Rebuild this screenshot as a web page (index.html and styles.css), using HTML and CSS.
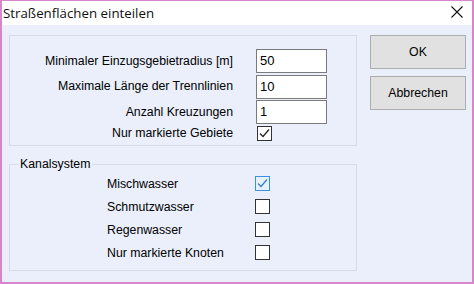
FILE: index.html
```html
<!DOCTYPE html>
<html>
<head>
	<meta charset="utf-8">
	<title>Straßenflächen einteilen</title>
	<link rel="stylesheet" href="styles.css">
</head>
<body>
	<div class="window">
		<header class="titlebar">
			<span class="title">Straßenflächen einteilen</span>
			<svg class="close" width="12" height="12" viewBox="0 0 12 12">
				<path d="M0.5 0.5 L11.5 11.5 M11.5 0.5 L0.5 11.5" stroke="#111" stroke-width="1.1" fill="none"/>
			</svg>
		</header>
		<main class="client">
			<div class="groups">
				<section class="group params">
					<label class="lbl">Minimaler Einzugsgebietradius [m]</label>
					<div class="field">50</div>
					<label class="lbl">Maximale Länge der Trennlinien</label>
					<div class="field">10</div>
					<label class="lbl">Anzahl Kreuzungen</label>
					<div class="field">1</div>
					<label class="lbl">Nur markierte Gebiete</label>
					<span class="check on"><svg width="13" height="13" viewBox="0 0 13 13"><path d="M2 6.5 L5 9.5 L11 2.5" stroke="#222" stroke-width="1.2" fill="none"/></svg></span>
				</section>
				<fieldset class="group kanal">
					<legend>Kanalsystem</legend>
					<div class="rows">
						<label class="lbl">Mischwasser</label>
						<span class="check on blue"><svg width="13" height="13" viewBox="0 0 13 13"><path d="M2 6.5 L5 9.5 L11 2.5" stroke="#2f7fd0" stroke-width="1.2" fill="none"/></svg></span>
						<label class="lbl">Schmutzwasser</label>
						<span class="check"></span>
						<label class="lbl">Regenwasser</label>
						<span class="check"></span>
						<label class="lbl">Nur markierte Knoten</label>
						<span class="check"></span>
					</div>
				</fieldset>
			</div>
			<div class="buttons">
				<button class="btn">OK</button>
				<button class="btn">Abbrechen</button>
			</div>
		</main>
	</div>
</body>
</html>
```

FILE: styles.css
```css
html, body {
	margin: 0;
	height: 100%;
}

body {
	font: 12.3px/1 "Liberation Sans", Arial, sans-serif;
	color: #000;
}

.window {
	box-sizing: border-box;
	width: 474px;
	height: 284px;
	border: 2px solid #d985cb;
	border-top-width: 1px;
	background: #eaeffb;
	display: flex;
	flex-direction: column;
}

.titlebar {
	height: 24px;
	background: #fff;
	display: flex;
	align-items: center;
	justify-content: space-between;
	padding: 0 9px 0 1px;
}

.title {
	font: 13.3px "Open Sans", "Noto Sans", sans-serif;
	color: #111;
	margin-top: -1px;
}

.close {
	margin-top: -2px;
}

.client {
	flex: 1;
	display: flex;
	padding: 10px 6px 0 7px;
}

.groups {
	width: 348px;
	display: flex;
	flex-direction: column;
	gap: 12px;
}

.group {
	box-sizing: border-box;
	border: 1px solid #d6dbe6;
	margin: 0;
}

.params {
	height: 111px;
	display: grid;
	grid-template-columns: 223px 71px;
	column-gap: 23px;
	grid-template-rows: 24px 24px 24px 16px;
	row-gap: 1.5px;
	align-items: center;
	padding-top: 13px;
	align-content: start;
}

.lbl {
	text-align: right;
	white-space: nowrap;
}

.field {
	box-sizing: border-box;
	height: 24px;
	background: #fff;
	border: 1px solid #7a7a7a;
	padding: 4px 3px 0;
	font-size: 13px;
}

.check {
	box-sizing: border-box;
	width: 15px;
	height: 15px;
	border: 1px solid #333;
	background: #fff;
	display: block;
	margin-left: 1px;
}

.check svg {
	display: block;
	margin: 0;
}

.check.blue {
	border-color: #3c8ee0;
	background: #e6f1fc;
}

.kanal {
	height: 113px;
	padding: 0;
}

.kanal legend {
	margin-left: 8px;
	padding: 0 2px;
}

.kanal .rows {
	display: grid;
	grid-template-columns: 148px 15px;
	padding: 6px 0 0;
	margin-left: 97px;
	grid-auto-rows: 15px;
	row-gap: 8px;
	align-items: center;
}

.kanal .rows .check {
	margin-left: 0;
}

.kanal .lbl {
	text-align: left;
}

.buttons {
	margin-left: 13px;
	display: flex;
	flex-direction: column;
	gap: 7px;
}

.btn {
	width: 96px;
	height: 34px;
	background: #e1e1e1;
	border: 1px solid #adadad;
	font: 12.3px "Liberation Sans", Arial, sans-serif;
	color: #000;
	padding: 0;
}
```
